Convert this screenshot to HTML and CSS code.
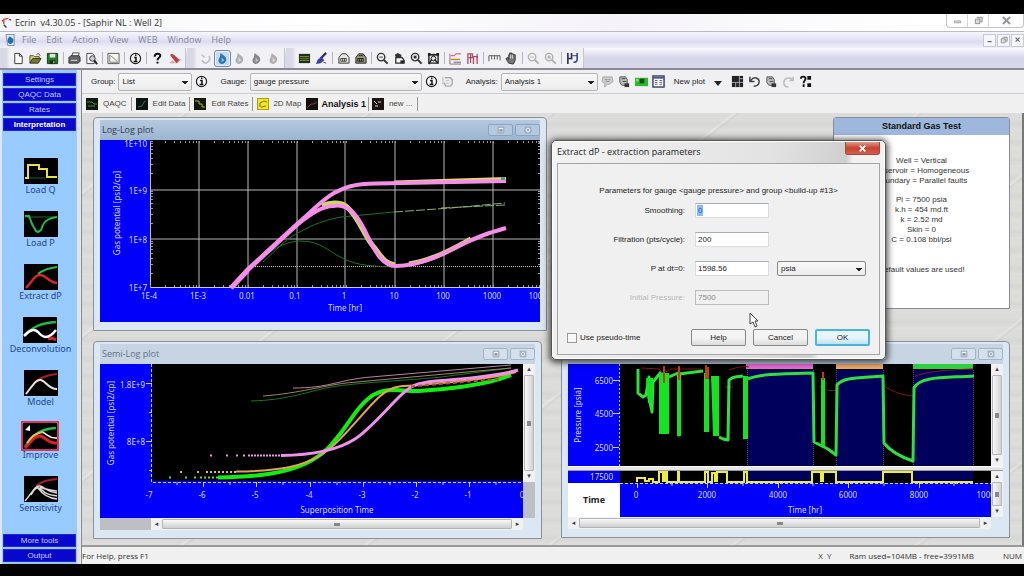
FILE: index.html
```html
<!DOCTYPE html>
<html lang="en">
<head>
<meta charset="utf-8">
<title>Ecrin v4.30.05 - [Saphir NL : Well 2]</title>
<link rel="stylesheet" href="styles.css">
</head>
<body>
<svg class="defs" aria-hidden="true">
  <symbol id="new" viewBox="0 0 14 14"><path d="M3 1.500h5l3 3v8H3z" fill="#fff" stroke="#333"/><path d="M8 1.500v3h3" fill="none" stroke="#333"/></symbol>
  <symbol id="open" viewBox="0 0 14 14"><path d="M1 12V4h4l1 1h5v2" fill="#d8d860" stroke="#444"/><path d="M1 12l3-5h9l-3 5z" fill="#77772a" stroke="#333"/><path d="M8 3c2-2 3-1 4 1" fill="none" stroke="#333"/></symbol>
  <symbol id="save" viewBox="0 0 14 14"><path d="M1.500 1.500h11v11h-11z" fill="#267a26" stroke="#143614"/><path d="M4 2h6v4H4z" fill="#dfe8df"/><path d="M4 9h6v4H4z" fill="#163016"/><path d="M8 10h1v2H8z" fill="#fff"/></symbol>
  <symbol id="print" viewBox="0 0 14 14"><path d="M4 5l1-4h7l-1 4" fill="#fff" stroke="#444"/><path d="M1 6l2-2h9l1 2v4l-2 2H1z" fill="#666" stroke="#333"/><path d="M3 9h7" stroke="#ddd"/></symbol>
  <symbol id="preview" viewBox="0 0 14 14"><path d="M2 1.500h6l2 2v9H2z" fill="#fff" stroke="#444"/><circle cx="8" cy="7" r="3" fill="#ccd" stroke="#333"/><path d="M10 9l3 4" stroke="#222" stroke-width="2"/></symbol>
  <symbol id="plot" viewBox="0 0 14 14"><path d="M1 1.500h12v11H1z" fill="#f6f6f0" stroke="#555"/><path d="M3 3v8h9M4 4l7 6" fill="none" stroke="#777"/></symbol>
  <symbol id="info" viewBox="0 0 14 14"><circle cx="7" cy="7" r="5.500" fill="#f5f5f5" stroke="#222" stroke-width="1.300"/><path d="M5.500 6h2v4M5 10.300h4M6.500 3.500h1.500" fill="none" stroke="#111" stroke-width="1.600"/></symbol>
  <symbol id="help" viewBox="0 0 14 14"><path d="M4 5c0-4 6-4 6-1 0 2-3 2-3 5M7 10.500v2" fill="none" stroke="#111" stroke-width="2.200"/></symbol>
  <symbol id="eraser" viewBox="0 0 14 14"><path d="M2 3l3-1 7 6-3 4z" fill="#c33b45"/><path d="M1 12l4-3 3 3z" fill="#e9a0a4"/><path d="M9 12l4-4" stroke="#833"/></symbol>
  <symbol id="drop" viewBox="0 0 14 14"><path d="M5 1l5 4c3 4-1 8-4 8-4-1-4-5-2-7z" fill="currentColor"/><path d="M6 6l3 3-3 2z" fill="#fff" opacity=".5"/></symbol>
  <symbol id="swirl" viewBox="0 0 14 14"><path d="M3 3l3 3M11 4c2 4-1 8-5 8M6 12L3 9" fill="none" stroke="#bbb" stroke-width="1.600"/></symbol>
  <symbol id="screen" viewBox="0 0 14 14"><path d="M1 2h12v10H1z" fill="#17311c"/><path d="M2 5h10M2 9h10" stroke="#b98d32"/><path d="M2 7h10" stroke="#3c8448"/></symbol>
  <symbol id="brush" viewBox="0 0 14 14"><path d="M12 1L6 7" stroke="#335" stroke-width="2.500"/><path d="M7 5l3 4-4 3-5 1 2-5z" fill="#3f3fa5"/><path d="M9 11l3 1" stroke="#447"/></symbol>
  <symbol id="lock" viewBox="0 0 14 14"><path d="M2 6l3-4h5l3 4v6H2z" fill="#e7e7dc" stroke="#333"/><path d="M4 10V7h6v3zM6 7v3M8 7v3" fill="none" stroke="#444"/></symbol>
  <symbol id="lockall" viewBox="0 0 14 14"><path d="M2 6l3-4h5l3 4v6H2z" fill="#9a9a7c" stroke="#222"/><path d="M4 10V7h6v3zM6 7v3M8 7v3M5 4h5" fill="none" stroke="#222"/></symbol>
  <symbol id="zoomout" viewBox="0 0 14 14"><circle cx="5.500" cy="5.500" r="4" fill="#f4f4f4" stroke="currentColor" stroke-width="1.500"/><path d="M3.500 5.500h4" stroke="currentColor"/><path d="M8.500 8.500l4 4" stroke="currentColor" stroke-width="2.200"/></symbol>
  <symbol id="zoomdot" viewBox="0 0 14 14"><circle cx="5.500" cy="5.500" r="4" fill="#eee" stroke="currentColor" stroke-width="1.500"/><path d="M4 4h3v3H4z" fill="currentColor"/><path d="M8.500 8.500l4 4" stroke="currentColor" stroke-width="2.200"/></symbol>
  <symbol id="paste" viewBox="0 0 14 14"><path d="M2 3l3-2 4 2v3H3z" fill="#333"/><path d="M3 6h7l2 3v3H3z" fill="#f4f4f4" stroke="#333" stroke-width="1.400"/><path d="M8 9h4v3H8z" fill="#222"/></symbol>
  <symbol id="zoomall" viewBox="0 0 14 14"><path d="M2 3h10v9H2z" fill="#ddd" stroke="#222" stroke-width="1.500"/><path d="M1 1h3v3H1zM6 2h2v2H6zM10 1h3v3h-3z" fill="#222"/><circle cx="7" cy="7" r="2.500" fill="none" stroke="#222"/><path d="M8 8l4 4M2 13l3-5" stroke="#222" stroke-width="1.500"/></symbol>
  <symbol id="steps" viewBox="0 0 14 14"><path d="M1 2v11h12" fill="none" stroke="#966"/><path d="M2 4h4l1-2h6" fill="none" stroke="#b45"/><path d="M2 8h10" stroke="#b83" stroke-width="1.500"/><path d="M5 11h8" stroke="#557"/></symbol>
  <symbol id="flags" viewBox="0 0 14 14"><path d="M2 13V2h5v4H3M8 13V5h4v8" fill="none" stroke="#c44f5b" stroke-width="1.500"/><path d="M5 2v10M12 2v4" stroke="#447"/></symbol>
  <symbol id="ruler" viewBox="0 0 14 14"><path d="M1 10V4h12v5" fill="#eee" stroke="#555"/><path d="M4 4v4M7 4v4M10 4v4" stroke="#555"/></symbol>
  <symbol id="hand" viewBox="0 0 14 14"><path d="M4 12L1 7l2-1 1 2V3h1V1h2v1h2v1h2v6l-2 4z" fill="#777" stroke="currentColor"/><path d="M6 3v4M8 3v4" stroke="#ddd"/></symbol>
  <symbol id="handoff" viewBox="0 0 14 14"><path d="M4 3h6l2 2v5l-2 2H5L3 8" fill="none" stroke="#aaa" stroke-width="1.500"/><path d="M5 6h4M5 9h4M2 2v8" stroke="#bbb"/></symbol>
  <symbol id="hj" viewBox="0 0 14 14"><path d="M2 1v12M6 1v7M2 7h4" stroke="#335" stroke-width="1.800"/><path d="M12 1v7c0 3-3 3-4 3" fill="none" stroke="#3f4fa5" stroke-width="1.800"/><path d="M7 4h5" stroke="#335"/></symbol>
  <symbol id="note" viewBox="0 0 14 14"><path d="M2 2h10l1 5-4 3H7l-3 3V9L1 7z" fill="#ccc" stroke="#aaa"/><path d="M4 5h6M5 7h4" stroke="#999"/></symbol>
  <symbol id="clip" viewBox="0 0 14 14"><path d="M2 2h6l2 3v6H4L2 8z" fill="#bbb" stroke="#555"/><path d="M4 4h4M5 7h4" stroke="#444"/><path d="M7 9h5v4H7z" fill="#333"/></symbol>
  <symbol id="battery" viewBox="0 0 14 14"><path d="M0 3h14v9H0z" fill="#2cb82c"/><path d="M5 4h5v5H5z" fill="#164c18"/><path d="M1 4h3v3H1z" fill="#71e071"/></symbol>
  <symbol id="sheet" viewBox="0 0 14 14"><path d="M1 1h12v12H1z" fill="#fff" stroke="#446" stroke-width="1.600"/><path d="M1 3h12" stroke="#55a" stroke-width="2"/><path d="M3 6h3M8 6h3M3 8h3M8 8h3M3 10h3M8 10h3" stroke="#557"/></symbol>
  <symbol id="tiles" viewBox="0 0 14 14"><path d="M1 1h12v12H1z" fill="#222"/><path d="M1 8h12M5 8v5M9 1v12M9 4h4" stroke="#aab"/></symbol>
  <symbol id="undo" viewBox="0 0 14 14"><path d="M2 2v5h5M3 6c3-5 9-3 9 1 0 4-3 5-6 5" fill="none" stroke="#444" stroke-width="1.600"/></symbol>
  <symbol id="redo" viewBox="0 0 14 14"><path d="M12 2v4H8M11 5C7 1 2 4 2 8c0 3 2 5 5 5" fill="none" stroke="#bbb" stroke-width="1.600"/></symbol>
  <symbol id="whatis" viewBox="0 0 14 14"><path d="M2 4c0-3 5-3 5 0 0 2-2 2-2 5M5 10v3" fill="none" stroke="#111" stroke-width="2"/><path d="M9 1h4v4H9zM9 9h4v4H9z" fill="#111"/></symbol>
  <symbol id="wmin" viewBox="0 0 10 10"><path d="M1.500 5.500h7v2h-7z" fill="#eee" stroke="#999"/></symbol>
  <symbol id="wmax" viewBox="0 0 10 10"><path d="M3 1.500h6v5H7M1.500 3.500h5v5h-5z" fill="#ddd" stroke="#888"/></symbol>
  <symbol id="wclose" viewBox="0 0 10 10"><path d="M1 1l8 8M9 1L1 9" stroke="currentColor" stroke-width="2.400"/></symbol>
  <symbol id="cmax" viewBox="0 0 10 10"><path d="M1.500 1.500h7v7h-7z" fill="#eef3f8" stroke="#8390a0"/><path d="M3 4h4v3H3z" fill="#8390a0"/></symbol>
  <symbol id="cclose" viewBox="0 0 10 10"><path d="M1.500 1.500h7v7h-7z" fill="#dde5ee" stroke="#8390a0"/><path d="M3 3l4 4M7 3L3 7" stroke="#9aa5b3"/></symbol>
</svg>

<div class="app">
  <header class="titlebar">
    <svg class="logo" viewBox="0 0 12 12"><path d="M8 1L3 2v5M1 4l3-2" fill="none" stroke="#d04a4a" stroke-width="1.500"/><path d="M3 8l3 3M9 2l2 1" stroke="#3a2f6a" stroke-width="1.500"/></svg>
    <h1>Ecrin&nbsp; v4.30.05 - [Saphir NL : Well 2]</h1>
    <div class="winbtns">
      <button aria-label="Minimize"><svg><use href="#wmin"/></svg></button>
      <button aria-label="Restore"><svg><use href="#wmax"/></svg></button>
      <button class="wide" aria-label="Close"><svg><use href="#wclose"/></svg></button>
    </div>
  </header>

  <nav class="menubar" aria-label="Main menu">
    <svg class="logo" viewBox="0 0 12 12"><path d="M1 0h9v12H3z" fill="#dfe7f2" stroke="#889"/><path d="M5 2l4 3c1 4-2 6-4 5-3-1-3-4 0-8" fill="#1f6fb5"/></svg>
    <button>File</button><button>Edit</button><button>Action</button><button>View</button><button>WEB</button><button>Window</button><button>Help</button>
    <div class="mdibtns">
      <button aria-label="Minimize document"><svg viewBox="0 0 10 10"><path d="M2 7h5" stroke="#667" stroke-width="1.500"/></svg></button>
      <button aria-label="Restore document"><svg><use href="#wmax"/></svg></button>
      <button aria-label="Close document"><svg viewBox="0 0 10 10"><path d="M2 2l5 5M7 2L2 7" stroke="#667" stroke-width="1.500"/></svg></button>
    </div>
  </nav>

  <div class="toolbar" role="toolbar" aria-label="Tools">
    <div class="group">
      <button aria-label="New"><svg><use href="#new"/></svg></button><button aria-label="Open"><svg><use href="#open"/></svg></button><button aria-label="Save"><svg><use href="#save"/></svg></button><i></i>
      <button aria-label="Print"><svg><use href="#print"/></svg></button><button aria-label="Preview"><svg><use href="#preview"/></svg></button><i></i>
      <button aria-label="Plot"><svg><use href="#plot"/></svg></button><i></i>
      <button aria-label="Information"><svg><use href="#info"/></svg></button><i></i>
      <button aria-label="Help"><svg><use href="#help"/></svg></button><button aria-label="Eraser"><svg><use href="#eraser"/></svg></button>
    </div>
    <div class="group">
      <button aria-label="Diamant"><svg><use href="#swirl"/></svg></button><button class="on" aria-label="Saphir"><svg><use href="#drop"/></svg></button><button class="off" aria-label="Topaze"><svg><use href="#drop"/></svg></button><button class="dim" aria-label="Rubis"><svg><use href="#drop"/></svg></button><button class="off" aria-label="Emeraude"><svg><use href="#drop"/></svg></button>
    </div>
    <div class="group">
      <button aria-label="Display"><svg><use href="#screen"/></svg></button><button aria-label="Brush"><svg><use href="#brush"/></svg></button><i></i>
      <button aria-label="Lock"><svg><use href="#lock"/></svg></button><button aria-label="Lock all"><svg><use href="#lockall"/></svg></button><i></i>
      <button aria-label="Zoom out"><svg><use href="#zoomout"/></svg></button><button aria-label="Paste"><svg><use href="#paste"/></svg></button><button aria-label="Zoom in"><svg><use href="#zoomdot"/></svg></button><button aria-label="Zoom all"><svg><use href="#zoomall"/></svg></button><i></i>
      <button aria-label="Steps"><svg><use href="#steps"/></svg></button><button aria-label="Flags"><svg><use href="#flags"/></svg></button><i></i>
      <button aria-label="Ruler"><svg><use href="#ruler"/></svg></button><button aria-label="Pan"><svg><use href="#hand"/></svg></button><i></i>
      <button class="off" aria-label="Previous zoom"><svg><use href="#zoomout"/></svg></button><button class="off" aria-label="Next zoom"><svg><use href="#zoomdot"/></svg></button><i></i>
      <button aria-label="Align"><svg><use href="#hj"/></svg></button>
    </div>
  </div>

  <div class="body">
    <aside class="sidebar">
      <button class="section">Settings</button>
      <button class="section">QAQC Data</button>
      <button class="section">Rates</button>
      <button class="section current">Interpretation</button>
      <div class="steps">
        <button><svg viewBox="0 0 34 26"><rect width="34" height="26"/><path d="M1 20h11M12 20h9" stroke="#276327"/><path d="M1 20h3V7h11v4h8v8h10" stroke="#e4e43c" stroke-width="2"/></svg>Load Q</button>
        <button><svg viewBox="0 0 34 26"><rect width="34" height="26"/><path d="M1 6h32" stroke="#276327"/><path d="M1 5h4l3 8 4 7 2 1 3-2 2-5c2-5 6-7 14-8" stroke="#25b84c" stroke-width="2"/></svg>Load P</button>
        <button><svg viewBox="0 0 34 26"><rect width="34" height="26"/><path d="M14 10c5-4 10-6 19-7" stroke="#22c33e" stroke-width="2"/><path d="M2 24C9 16 12 10 17 11c6 1 7 7 16 8" stroke="#df2626" stroke-width="2.500"/></svg>Extract dP</button>
        <button><svg viewBox="0 0 34 26"><rect width="34" height="26"/><path d="M2 18C12 8 20 6 33 5" stroke="#22b83e" stroke-width="2.500"/><path d="M25 22l4-1 4 2" stroke="#d22" stroke-width="3"/><path d="M1 19c6-6 10-8 14-4 5 6 10 8 18-2" stroke="#fff" stroke-width="2.500"/></svg>Deconvolution</button>
        <button><svg viewBox="0 0 34 26"><rect width="34" height="26"/><path d="M11 12c6-5 12-7 22-8" stroke="#a81d28" stroke-width="2"/><path d="M2 24C9 15 12 9 17 10c6 2 7 9 16 9" stroke="#e6e0dc" stroke-width="2"/></svg>Model</button>
        <button class="hot"><svg viewBox="0 0 34 26"><rect width="34" height="26"/><path d="M2 24C12 10 18 6 33 5" stroke="#22c33e" stroke-width="2.500"/><path d="M19 9c6 2 7 7 15 6" stroke="#fff" stroke-width="1.500"/><path d="M2 25c7-7 9-12 15-12 6 1 8 8 17 7" stroke="#d42222" stroke-width="3"/><path d="M4 20C10 12 13 10 20 9" stroke="#dfc05a" stroke-width="2"/><path d="M2 7l5-5v6z" fill="#fff"/></svg>Improve</button>
        <button><svg viewBox="0 0 34 26"><rect width="34" height="26"/><path d="M12 10c6-5 12-6 21-7" stroke="#a81d28" stroke-width="2"/><path d="M1 25C8 17 11 9 16 10c6 2 7 6 17 7M7 19C13 8 16 12 19 15c4 4 8 4 14 5M14 12c5 7 10 10 19 11M16 11c4 2 8 3 17 4" stroke="#ddd8d3" stroke-width="1.500"/></svg>Sensitivity</button>
      </div>
      <button class="section">More tools</button>
      <button class="section">Output</button>
    </aside>

    <main class="main">
      <div class="controls">
        <label for="group">Group:</label><select id="group" class="s1"><option>List</option></select>
        <button class="ic" aria-label="Group information"><svg><use href="#info"/></svg></button>
        <label for="gauge" class="gap">Gauge:</label><select id="gauge" class="s2"><option>gauge pressure</option></select>
        <button class="ic" aria-label="Gauge information"><svg><use href="#info"/></svg></button>
        <button class="ic" aria-label="Pick gauge"><svg><use href="#handoff"/></svg></button>
        <label for="analysis" class="gap">Analysis:</label><select id="analysis" class="s3"><option>Analysis 1</option></select>
        <div class="icons">
          <button class="ic" aria-label="Comment"><svg><use href="#note"/></svg></button>
          <button class="ic" aria-label="Copy"><svg><use href="#clip"/></svg></button>
          <button class="ic" aria-label="Status"><svg><use href="#battery"/></svg></button>
          <button class="ic" aria-label="Report"><svg><use href="#sheet"/></svg></button>
          <button class="newplot">New plot <svg viewBox="0 0 8 5"><path d="M0 0h8L4 5z"/></svg></button>
          <button class="ic" aria-label="Tile"><svg><use href="#tiles"/></svg></button>
          <button class="ic" aria-label="Undo"><svg><use href="#undo"/></svg></button>
          <button class="ic" aria-label="Copy plot"><svg><use href="#clip"/></svg></button>
          <button class="ic" aria-label="Redo"><svg><use href="#redo"/></svg></button>
          <button class="ic" aria-label="What is this"><svg><use href="#whatis"/></svg></button>
        </div>
      </div>

      <div class="tabs" role="tablist">
        <button role="tab"><svg viewBox="0 0 12 12"><rect width="12" height="12" fill="#101810"/><path d="M1 4h5l2 2h3M2 8h7" stroke="#3f8a3f"/></svg>QAQC</button>
        <button role="tab"><svg viewBox="0 0 12 12"><rect width="12" height="12" fill="#0b1310"/><path d="M2 9l4-1 2-4 2-1" stroke="#3b6b58"/></svg>Edit Data</button>
        <button role="tab"><svg viewBox="0 0 12 12"><rect width="12" height="12" fill="#14170c"/><path d="M1 3h4v3h3v3h3" stroke="#b5b53a"/></svg>Edit Rates</button>
        <button role="tab" class="open"><svg viewBox="0 0 12 12"><rect width="12" height="12" fill="#f2e61e"/><path d="M3 9V5l4-2 3 1M4 9l5-1" stroke="#77701a"/><rect x=".5" y=".5" width="11" height="11" fill="none" stroke="#a79b20"/></svg>2D Map</button>
        <button role="tab" aria-selected="true" class="active"><svg viewBox="0 0 12 12"><rect width="12" height="12" fill="#120d0e"/><path d="M1 10l4-4h3l3-2" stroke="#7d3c42"/></svg>Analysis 1</button>
        <button role="tab"><svg viewBox="0 0 12 12"><rect width="12" height="12" fill="#1b1512"/><path d="M2 3l3 3M6 4h3M3 8h3" stroke="#ddd"/></svg>new ...</button>
      </div>

      <section class="workspace">
        <article class="win focus">
          <header><h2>Log-Log plot</h2><button aria-label="Maximize"><svg><use href="#cmax"/></svg></button><button aria-label="Close"><svg><use href="#cclose"/></svg></button></header>
          <svg class="chart" viewBox="99 140 440 182">
            <rect x="99" y="140" width="440" height="182" fill="#0000fb"/>
            <rect x="149" y="140" width="390" height="147" fill="#000"/>
            <path class="grid" d="M198 141v146M247 141v146M296 141v146M344 141v146M394 141v146M443 141v146M492 141v146M149 190h390M149 239h390"/>
            <path class="axis" d="M149.500 141V287.500H539"/>
            <path d="M149 286H539M149 142H539" stroke="#999" stroke-width="2" stroke-dasharray="1 14 1 8 1 5 1 4 1 3 1 3 1 2 1 2"/>
            <path d="M151 141v146M538 141v146" stroke="#999" stroke-width="2" stroke-dasharray="1 1 1 2 1 2 1 3 1 4 1 5 1 8 1 17"/>
            <path d="M252 266.500h287" stroke="#bbb" stroke-dasharray="1 1"/>
            <path class="thin" d="M262 262C275 250 284 240 295 234S318 221 340 217L393 212"/>
            <path class="thin" d="M247 270C262 256 280 241 300 241S328 252 343 259 372 266 393 267H405"/>
            <path d="M393 212L450 208 504 203M440 208L504 205" fill="none" stroke="#8fae75" stroke-dasharray="9 2"/>
            <path d="M393 182L505 178.500" stroke="#e5d96b" stroke-width="3"/>
            <path d="M321 205.500C330 202 341 202 346 207 357 216 364 237 372 246S382 263 394 265M408 264C433 260 455 247 470 239" fill="none" stroke="#ceda5e" stroke-width="5"/>
            <path d="M230 288L247 269 296 224C311 211 322 199 333 193S352 184 375 183.500L505 181" fill="none" stroke="#f58ee8" stroke-width="4"/>
            <path d="M230 288L247 270" stroke="#f58ee8" stroke-width="5"/>
            <path d="M247 270L296 225C309 214 322 206 332 206 350 202 360 222 367 237S382 266 395 266C425 265 447 251 464 243S488 233 505 228" fill="none" stroke="#f58ee8" stroke-width="4"/>
            <path d="M500 177h4v3h-4z" fill="#35ae74"/>
            <g class="t end"><text x="146" y="147">1E+10</text><text x="146" y="194">1E+9</text><text x="146" y="243">1E+8</text><text x="146" y="291">1E+7</text></g>
            <g class="t mid"><text x="148" y="299">1E-4</text><text x="197" y="299">1E-3</text><text x="246" y="299">0.01</text><text x="294" y="299">0.1</text><text x="343" y="299">1</text><text x="393" y="299">10</text><text x="442" y="299">100</text><text x="491" y="299">1000</text><text x="539" y="299">10000</text><text x="344" y="311">Time [hr]</text><text transform="translate(119 213) rotate(-90)">Gas potential [psi2/cp]</text></g>
          </svg>
        </article>

        <article class="card">
          <h2>Standard Gas Test</h2>
          <p>Well = Vertical<br>Reservoir = Homogeneous<br>Boundary = Parallel faults</p>
          <p>Pi = 7500 psia<br>k.h = 454 md.ft<br>k = 2.52 md<br>Skin = 0<br>C = 0.108 bbl/psi</p>
          <p class="note">Default values are used!</p>
        </article>

        <article class="win semi">
          <header><h2>Semi-Log plot</h2><button aria-label="Maximize"><svg><use href="#cmax"/></svg></button><button aria-label="Close"><svg><use href="#cclose"/></svg></button></header>
          <div class="pane">
            <svg class="chart" viewBox="99 364 423 154">
              <rect x="99" y="364" width="423" height="154" fill="#0000fb"/>
              <rect x="151" y="364" width="371" height="117" fill="#000"/>
              <path d="M150.500 364V482.500H522" fill="none" stroke="#ccd" stroke-dasharray="3 2"/>
              <path d="M145 383.500h6M145 441.500h6M148 412.500h3M148 470.500h3M202.500 482v5M255.500 482v5M309.500 482v5M362.500 482v5M415.500 482v5M468.500 482v5M176 482v3M229 482v3M282 482v3M336 482v3M389 482v3M442 482v3M495 482v3" stroke="#ccd"/>
              <path class="thin" d="M250 401C285 400 302 393 325 388S400 381 440 377L510 368"/>
              <path d="M292 388C330 388 335 380 370 377L510 365" fill="none" stroke="#b383a4"/>
              <path d="M262 396C300 393 320 386 345 383L510 368" fill="none" stroke="#9c8662"/>
              <path d="M168 477.500h2M184 477.500h2M193 477.500h2M199 477.500h18" stroke="#5ad65a" stroke-width="2" stroke-dasharray="2 2"/>
              <path d="M217 477.500C270 477 308 470 330 445S352 411 368 398 400 392 418 391 485 386 510 375" fill="none" stroke="#12ed12" stroke-width="4"/>
              <path d="M179 472h2M196 472h2M205 472h30" stroke="#e3b47c" stroke-width="2" stroke-dasharray="2 2"/>
              <path d="M235 471.500C280 471 302 466 320 455S358 417 375 400 400 387 418 385 490 380 515 372" fill="none" stroke="#e4a254" stroke-width="2"/>
              <path d="M209 455.500h2M225 455.500h2M235 455.500h2M242 455.500h2M247 455.500h35" stroke="#e79ae0" stroke-width="2" stroke-dasharray="2 1"/>
              <path d="M280 455.500C320 455 340 448 354 439S384 411 397 398 415 383 435 381 490 378 517 370" fill="none" stroke="#ef90ec" stroke-width="3"/>
              <path d="M410 386.500L500 379" stroke="#a8533d" stroke-width="2" stroke-dasharray="4 3"/>
              <g class="t end"><text x="144" y="388">1.8E+9</text><text x="144" y="445">8E+8</text></g>
              <g class="t mid"><text x="148" y="498">-7</text><text x="201" y="498">-6</text><text x="254" y="498">-5</text><text x="308" y="498">-4</text><text x="361" y="498">-3</text><text x="414" y="498">-2</text><text x="467" y="498">-1</text><text x="521" y="498">0</text><text x="336" y="513">Superposition Time</text><text transform="translate(113 423) rotate(-90)">Gas potential [psi2/cp]</text></g>
            </svg>
            <div class="vbar short"><b>▴</b><span></span><b>▾</b></div>
          </div>
          <div class="hbar inset"><b>◂</b><span></span><b>▸</b></div>
        </article>

        <article class="win">
          <header><h2>History plot</h2><button aria-label="Maximize"><svg><use href="#cmax"/></svg></button><button aria-label="Close"><svg><use href="#cclose"/></svg></button></header>
          <div class="pane">
            <svg class="chart" viewBox="567 364 423 102">
              <rect x="567" y="364" width="423" height="102" fill="#0000fb"/>
              <rect x="619" y="364" width="371" height="102" fill="#000"/>
              <path d="M746 370h66v96h-66zM836 370h46v96h-46zM912 370h60v96h-60z" fill="#00005c"/>
              <path d="M746.500 370v96M812.500 370v96M835.500 370v96M882.500 370v96M912.500 370v96M972.500 370v96" stroke="#6d3b78" stroke-dasharray="1 1"/>
              <path d="M745 364h67v5h-67z" fill="#ef6bdf"/><path d="M835 364h47v5h-47z" fill="#f0aa6b"/><path d="M912 364h60v5h-60z" fill="#2bd23e"/>
              <path d="M618.500 364v102" stroke="#ccd" stroke-dasharray="2 2"/><path d="M612 380.500h6M612 413.500h6M612 447.500h6" stroke="#ccd"/>
              <path d="M640 368l18 1 4 4 8-4h30M724 387h8M728 370c5-2 12-4 20-3M818 386c4 2 7 6 17 4M883 386c8 5 16 9 29 10M914 376c16-5 30-6 58-7" fill="none" stroke="#8c1515"/>
              <path class="hist" d="M637 369v24l5 4 3-2 3-18v20l3 15 1-30 8-10M668 377l9-4h1v62V374l24-3M718 437l4 2 5 1 1-60c4-4 8-3 14-4M747 379c10-5 30-5 65-6l1 69 14 7 8 6 1-70c6-8 22-7 46-9l1 67c6 8 17 14 29 18l1-73c6-12 30-10 60-12"/>
              <path d="M645 378h7v25h-5zM658 373h10v61h-10zM676 373h4v63h-4zM703 373h5v59h-5zM710 376h8v60h-6zM742 376h5v63h-5zM820 378h4v68h-4z" fill="#12e51f"/>
              <path d="M663 366v17M678 366v14M705 365v14M707 367v12M822 372v8" stroke="#c43e1b" stroke-width="2"/>
              <g class="t end"><text x="612" y="384">6500</text><text x="612" y="417">4500</text><text x="612" y="451">2500</text></g>
              <g class="t mid"><text transform="translate(580 415) rotate(-90)">Pressure [psia]</text></g>
            </svg>
            <div class="vbar"><b>▴</b><span></span><b>▾</b></div>
          </div>
          <div class="split"></div>
          <div class="pane">
            <svg class="chart" viewBox="567 471 423 46">
              <rect x="567" y="471" width="423" height="46" fill="#0000fb"/>
              <rect x="619" y="471" width="371" height="12" fill="#000"/>
              <path d="M746 471h66v10h-66zM836 471h46v10h-46zM912 471h60v10h-60z" fill="#00005c"/>
              <path d="M636 482v-4h8v3h4v-2h4v3h6v-10h4v9h2v-9h2v10h11v-10h1v10h26v-10h3v10h4v-9h3v8h2v-9h10v10h17v-10h3v10h65v-10h9v9h2v-9h13v10h47v-10h29v10h61" fill="none" stroke="#ecec3c" stroke-width="2"/>
              <path d="M619 483.500h371" stroke="#ccd" stroke-dasharray="3 2"/>
              <path d="M636.500 483v5M706.500 483v5M777.500 483v5M847.500 483v5M918.500 483v5M671 483v3M742 483v3M812 483v3M883 483v3M953 483v3" stroke="#ccd"/>
              <g class="t end"><text x="612" y="480">17500</text></g>
              <g class="t mid"><text x="635" y="498">0</text><text x="706" y="498">2000</text><text x="777" y="498">4000</text><text x="847" y="498">6000</text><text x="918" y="498">8000</text><text x="987" y="498">10000</text><text x="804" y="513">Time [hr]</text></g>
              <rect x="567" y="483" width="52" height="34" fill="#fff"/><text class="time" x="593" y="503">Time</text>
            </svg>
            <div class="vbar"><b>▴</b><span></span><b>▾</b></div>
          </div>
          <div class="hbar"><b>◂</b><span></span><b>▸</b></div>
        </article>

        <form class="dialog" role="dialog" aria-labelledby="dlg-title">
          <header><h2 id="dlg-title">Extract dP - extraction parameters</h2><button type="button" aria-label="Close dialog"><svg><use href="#wclose"/></svg></button></header>
          <div class="panel">
            <p>Parameters for gauge &lt;gauge pressure&gt; and group &lt;build-up #13&gt;</p>
            <div class="fields">
              <label for="smooth">Smoothing:</label><span class="sel"><input id="smooth" value="0"></span>
              <label for="filt">Filtration (pts/cycle):</label><input id="filt" value="200">
              <label for="pdt">P at dt=0:</label><input id="pdt" value="1598.56"><select aria-label="Pressure unit"><option>psia</option></select>
              <label for="pinit" class="disabled">Initial Pressure:</label><input id="pinit" value="7500" disabled>
            </div>
            <footer>
              <input type="checkbox" id="pseudo"><label for="pseudo">Use pseudo-time</label>
              <button type="button">Help</button><button type="button">Cancel</button><button type="button" class="ok">OK</button>
            </footer>
          </div>
          <svg class="cursor" viewBox="0 0 10 16"><path d="M1 1v11l3-2 2 5 2-1-2-5h3z" fill="#fff" stroke="#444"/></svg>
        </form>
      </section>

      <footer class="status"><span>For Help, press F1</span><span class="xy">X&nbsp; Y</span><span class="ram">Ram used=104MB - free=3991MB</span><span>NUM</span></footer>
    </main>
  </div>
</div>
</body>
</html>
```
FILE: styles.css
```css
* { box-sizing: border-box; }
body {
  margin: 0;
  background: #000;
  color: #222;
  font: 8px/10px "Liberation Sans", Arial, sans-serif;
}
h1, h2, p { margin: 0; font: inherit; }
button, input, select { font: inherit; color: inherit; margin: 0; padding: 0; }
button { border: 0; background: none; display: flex; align-items: center; justify-content: center; }
svg { display: block; fill: none; }
.defs { position: absolute; width: 0; height: 0; }

.app { min-height: 100vh; padding: 14px 0; display: flex; flex-direction: column; }

.titlebar {
  display: flex; align-items: center; gap: 3px; height: 18px; padding-left: 1px;
  background: linear-gradient(90deg, #f4f4f6, #fff 30%, #f5f3f8 60%, #fff 90%);
  border-bottom: 1px solid #b9bcc6;
}
.logo { width: 11px; height: 12px; }
.titlebar h1 { font: 9px/12px "Open Sans", sans-serif; color: #333; }
.winbtns { display: flex; margin-left: auto; align-self: flex-start; height: 14px; border: 1px solid #c3c3cb; border-top: 0; border-radius: 0 0 4px 4px; }
.winbtns button { width: 21px; border-right: 1px solid #d5d5da; color: #999; }
.winbtns .wide { width: 34px; border: 0; }
.winbtns svg { width: 9px; height: 9px; }

.menubar {
  display: flex; align-items: center; height: 16px; padding-left: 5px; gap: 10px;
  background: linear-gradient(#f6f6fc, #dcdcf0 60%, #f0f0fa);
  font: 9px/12px "Open Sans", sans-serif; color: #85859a;
}
.menubar .logo { margin-right: -4px; }
.mdibtns { display: flex; gap: 1px; margin-left: auto; }
.mdibtns button { width: 13px; height: 13px; border: 1px solid #c3cade; background: #f4f6fc; }
.mdibtns svg { width: 8px; height: 8px; }

.toolbar { display: flex; gap: 1px; height: 22px; background: linear-gradient(#fafaff, #d6d6ea 50%, #d8d8ea); border-bottom: 2px solid #8a8a96; }
.group { display: flex; align-items: center; gap: 4px; padding: 0 4px 0 12px; background: linear-gradient(90deg, #d9d9e6 6px, #f1f1f5 10px); border-right: 1px solid #c4c4cf; }
.group i { width: 1px; height: 12px; background: #b4b4bd; }
.group button, .group svg { width: 13px; height: 13px; color: #333; }
.group .on svg { color: #2c76b8; }
.group .on { outline: 1px solid #6d88ab; outline-offset: 1px; background: #c5daee; border-radius: 1px; }
.group .off svg { color: #b0b0b0; }
.group .dim svg { color: #888; }

.body { flex: 1; display: grid; grid-template-columns: 81px 1fr; }

.sidebar { display: flex; flex-direction: column; gap: 2px; padding: 3px 4px 2px 3px; background: #98cbff; border-right: 1px solid #e8e8ee; box-shadow: inset -3px 0 #dfe3ee, inset 2px 0 #dce8f8; }
.section { height: 13px; background: #0808cc; color: #c5ccff; font: 8px/11px "Liberation Sans", sans-serif; border: 1px solid #2424dd; }
.section.current { color: #fff; font-weight: bold; }
.steps { flex: 1; display: flex; flex-direction: column; align-items: center; gap: 15px; padding: 25px 0 0 2px; }
.steps button { flex-direction: column; font: 9px/12px "Noto Sans", sans-serif; color: #25459a; }
.steps svg { width: 34px; height: 26px; }
.steps rect { fill: #000; }
.steps .hot svg { outline: 2px solid #d8375a; }

.main { display: flex; flex-direction: column; min-width: 0; background: #f0f0f0; border-left: 1px solid #888; }

.controls { display: flex; align-items: center; height: 24px; padding-left: 9px; gap: 3px; background: #f0f0f2; border-bottom: 1px solid #cdcdcd; }
select {
  appearance: none; height: 18px; padding: 0 12px 0 3px; border: 1px solid #b4b4b4; border-radius: 2px;
  background:
    linear-gradient(#222, #222) right 3px top 50% / 6px 1px no-repeat,
    linear-gradient(#222, #222) right 4px top calc(50% + 1px) / 4px 1px no-repeat,
    linear-gradient(#222, #222) right 5px top calc(50% + 2px) / 2px 1px no-repeat,
    linear-gradient(#f8f8f8, #ececec);
}
.s1 { width: 74px; }
.s2 { width: 172px; }
.s3 { width: 97px; }
.ic, .ic svg { width: 13px; height: 13px; }
.controls .gap { margin-left: 9px; }
.icons { display: flex; align-items: center; gap: 4px; }
.newplot { gap: 9px; padding: 0 5px; }
.newplot svg { width: 8px; height: 5px; fill: #222; margin-top: 4px; }

.tabs { display: flex; align-items: center; height: 19px; padding-left: 4px; }
.tabs button { gap: 5px; height: 14px; padding-right: 4px; margin-right: 4px; border-right: 1px solid #999; color: #444; }
.tabs svg { width: 12px; height: 12px; }
.tabs .open { border: 0; gap: 4px; padding-right: 1px; }
.tabs .active { font: bold 9px/12px "Liberation Sans", sans-serif; color: #111; gap: 3px; padding-right: 2px; margin-right: 3px; }

.workspace {
  position: relative; flex: 1; display: grid; align-items: start; align-content: start;
  grid-template-columns: 454fr 449fr; gap: 10px 14px; padding: 4px 12px 6px 11px;
  border-right: 2px solid #777; border-bottom: 2px solid #999;
  background:
    repeating-linear-gradient(142deg, transparent 0 61px, rgb(255 255 255 / 25%) 63px, rgb(120 120 120 / 8%) 65px, transparent 67px 113px),
    repeating-linear-gradient(#dcdcda 0 7px, #d6d6d5 11px, #dfdfdd 18px);
}
.win { background: #dbe7f2; border: 1px solid #8c9199; border-radius: 4px 4px 1px 1px; padding: 2px 6px 8px; color: #667080; }
.win header { display: flex; align-items: center; height: 20px; gap: 2px; background: #c6d4e4; font: 9px/12px "Open Sans", sans-serif; }
.win h2 { flex: 1; padding-left: 2px; }
.win.focus header { background: linear-gradient(#b5c9de, #9bb5d2); color: #2d3b50; }
.win header button { width: 25px; height: 12px; border: 1px solid #a4b3c6; border-radius: 2px; background: #d4e0ec; }
.win.focus header button { background: #b4c9e0; border-color: #8ba3c0; }
.win header svg { width: 8px; height: 8px; }
.semi { margin-right: 5px; }
.chart { width: 100%; height: auto; min-width: 0; }
.pane { display: grid; grid-template-columns: 1fr 12px; }
.grid { stroke: #b9b9b9; stroke-width: 1; }
.axis { stroke: #ccc; }
.thin { stroke: #1c7426; }
.hist { stroke: #2fe03c; stroke-width: 3; stroke-linejoin: round; }
.t { font: 8px "Noto Sans", sans-serif; fill: #d5dcff; }
.end { text-anchor: end; }
.mid { text-anchor: middle; }
.time { font: bold 9px "Noto Sans", sans-serif; fill: #222; text-anchor: middle; }
.split { height: 5px; background: #e6e6e6; border-top: 1px solid #fff; border-bottom: 1px solid #999; }
.vbar, .hbar { display: flex; align-items: center; background: #f0f1f3; color: #444; }
.vbar { flex-direction: column; }
.vbar b, .hbar b { font: 7px/11px "DejaVu Sans", sans-serif; flex: 0 0 11px; text-align: center; }
.vbar span, .hbar span { flex: 1; border: 1px solid #b5b5b5; border-radius: 1px; }
.vbar span { width: 10px; background: linear-gradient(#888, #888) center / 4px 5px no-repeat, linear-gradient(90deg, #f8f8f8, #d2d2d4); }
.hbar span { height: 10px; background: linear-gradient(#888, #888) center / 6px 3px no-repeat, linear-gradient(#f8f8f8, #cfcfd1); }
.hbar { height: 12px; margin-right: 12px; }
.short { margin-bottom: 36px; box-shadow: 0 36px #bebfc4; }
.inset { border-left: 51px solid #bebfc4; }

.card { justify-self: end; width: 177px; min-height: 192px; background: #fff; border: 1px solid #888e99; border-radius: 3px 3px 0 0; text-align: center; color: #333; }
.card h2 { background: #9db8dc; font-weight: bold; font-size: 9px; line-height: 17px; color: #111; margin-bottom: 21px; }
.card p { margin-bottom: 9px; }
.card .note { margin-top: 20px; }

.dialog {
  position: absolute; top: 27px; left: 469px; width: 335px; padding: 1px 5px 4px;
  background: linear-gradient(100deg, #f3f3f3, #e2e2e2 60%, #cfcfcf 80%, #f2f2f2 82%);
  border: 1px solid #555; border-radius: 5px; box-shadow: 0 1px 6px 2px rgb(0 0 0 / 65%), inset 0 0 0 1px #fff; color: #222;
}
.dialog header { display: flex; justify-content: space-between; height: 21px; }
.dialog h2 { font: 9px/19px "Open Sans", sans-serif; }
.dialog header button { width: 35px; height: 13px; background: linear-gradient(#dd9a90, #c8402f 50%, #d6604c); border: 1px solid #9a4a42; border-top: 0; border-radius: 0 0 3px 3px; color: #fff; }
.dialog header svg { width: 7px; height: 7px; }
.panel { background: #f0f0f0; border: 1px solid #a5a5a5; padding: 22px 9px 8px; }
.panel p { text-align: center; padding-bottom: 7px; }
.fields { display: grid; grid-template-columns: 118px 74px 87px; column-gap: 10px; row-gap: 14px; align-items: center; }
.fields label { grid-column: 1; text-align: right; }
.fields input { width: 100%; height: 15px; padding: 0 2px; border: 1px solid #d9dde3; border-top-color: #a8acb5; background: #fff; }
.fields .sel { display: flex; position: relative; }
.fields .sel::after { content: ""; position: absolute; left: 2px; top: 2px; width: 6px; height: 11px; background: rgb(51 140 255 / 60%); }
.fields select { height: 15px; margin-left: -2px; border-color: #888; }
.fields .disabled { color: #b8b8b8; }
.fields input:disabled { background: #f0f0f0; color: #888; border-color: #bbb; }
.panel footer { display: flex; align-items: center; padding-top: 24px; }
.panel footer input { appearance: none; width: 10px; height: 10px; border: 1px solid #999; background: #f8f8f8; }
.panel footer label { margin: 0 auto 0 3px; }
.panel footer button { width: 55px; height: 17px; margin-left: 7px; border: 1px solid #888; border-radius: 2px; background: linear-gradient(#f4f4f4 50%, #dcdcdc); }
.panel footer .ok { border: 2px solid #48b5dc; background: linear-gradient(#e8f6fc 50%, #bfe2f2); }
.cursor { position: absolute; width: 10px; height: 16px; left: 197px; top: 171px; }

.status { display: flex; align-items: center; height: 17px; padding-right: 2px; font: 8px/12px "Open Sans", sans-serif; color: #333; }
.status .xy { margin-left: auto; }
.status .ram { margin: 0 29px 0 18px; }
```
